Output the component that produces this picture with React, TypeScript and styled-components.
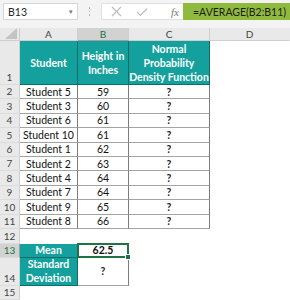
import React from 'react';
import styled, { createGlobalStyle, css } from 'styled-components';

const GlobalStyle = createGlobalStyle`
  html, body {
    margin: 0;
    padding: 0;
    background: #ffffff;
  }
  body {
    font-family: Lato, 'Open Sans', sans-serif;
  }
`;

const TEAL = '#14a19d';
const TEAL_LINE = '#0d6d6a';
const GRID_LINE = '#a3a3a3';
const HEAD_BG = '#e9e9e9';
const HEAD_LINE = '#cfcfcf';
const EXCEL_GREEN = '#217346';

type Row = { name: string; height: string };

const rows: Row[] = [
  { name: 'Student 5', height: '59' },
  { name: 'Student 3', height: '60' },
  { name: 'Student 6', height: '61' },
  { name: 'Student 10', height: '61' },
  { name: 'Student 1', height: '62' },
  { name: 'Student 2', height: '63' },
  { name: 'Student 4', height: '64' },
  { name: 'Student 7', height: '64' },
  { name: 'Student 9', height: '65' },
  { name: 'Student 8', height: '66' },
];

export default function App() {
  return (
    <>
      <GlobalStyle />
      <Window>
        <FormulaBar>
          <NameBox>
            <span>B13</span>
            <Caret>▾</Caret>
          </NameBox>
          <Dots>
            <i />
            <i />
            <i />
          </Dots>
          <ActionBox>
            <ActionIcon>
              <svg width="11" height="11" viewBox="0 0 11 11">
                <path d="M1 1 L10 10 M10 1 L1 10" stroke="#bdbdbd" strokeWidth="1.2" fill="none" />
              </svg>
            </ActionIcon>
            <ActionIcon>
              <svg width="12" height="10" viewBox="0 0 12 10">
                <path d="M1 5 L4.5 8.5 L11 1.5" stroke="#bdbdbd" strokeWidth="1.2" fill="none" />
              </svg>
            </ActionIcon>
            <Fx>fx</Fx>
          </ActionBox>
          <FormulaInput>=AVERAGE(B2:B11)</FormulaInput>
        </FormulaBar>

        <Sheet>
          <Corner>
            <svg width="12" height="11" viewBox="0 0 12 11">
              <path d="M12 0 L12 11 L0 11 Z" fill="#c3c3c3" />
            </svg>
          </Corner>
          <ColHead>A</ColHead>
          <ColHead $active>B</ColHead>
          <ColHead>C</ColHead>
          <ColHead $last>D</ColHead>

          <RowHead>1</RowHead>
          <HeadCell>Student</HeadCell>
          <HeadCell>
            Height in
            <br />
            Inches
          </HeadCell>
          <HeadCell>
            Normal
            <br />
            Probability
            <br />
            Density Function
          </HeadCell>
          <Blank />

          {rows.map((r, i) => (
            <React.Fragment key={r.name}>
              <RowHead>{i + 2}</RowHead>
              <DataCell>{r.name}</DataCell>
              <DataCell>{r.height}</DataCell>
              <DataCell $bold>?</DataCell>
              <Blank />
            </React.Fragment>
          ))}

          <RowHead>12</RowHead>
          <Blank />
          <Blank />
          <Blank />
          <Blank />

          <RowHead $active>13</RowHead>
          <HeadCell>Mean</HeadCell>
          <SelectedCell>62.5</SelectedCell>
          <Blank />
          <Blank />

          <RowHead>14</RowHead>
          <HeadCell>
            Standard
            <br />
            Deviation
          </HeadCell>
          <DataCell $bold>?</DataCell>
          <Blank />
          <Blank />

          <RowHead>15</RowHead>
          <Blank />
          <Blank />
          <Blank />
          <Blank />
        </Sheet>
      </Window>
    </>
  );
}

const Window = styled.div`
  width: 290px;
  height: 300px;
  overflow: hidden;
  background: #f3f3f3;
  display: flex;
  flex-direction: column;
`;

const FormulaBar = styled.div`
  height: 28px;
  display: flex;
  align-items: flex-start;
  padding: 3px 0 0 3px;
  box-sizing: border-box;
`;

const NameBox = styled.div`
  width: 75px;
  height: 17px;
  box-sizing: border-box;
  background: #ffffff;
  border: 1px solid #d6d6d6;
  display: flex;
  align-items: center;
  justify-content: space-between;
  padding: 0 4px 0 4px;
  font-size: 10.5px;
  color: #262626;
`;

const Caret = styled.span`
  font-size: 7px;
  color: #777;
`;

const Dots = styled.div`
  width: 23px;
  height: 17px;
  display: flex;
  flex-direction: column;
  align-items: center;
  justify-content: center;
  gap: 2px;

  i {
    width: 1.5px;
    height: 1.5px;
    background: #b8b8b8;
    display: block;
  }
`;

const ActionBox = styled.div`
  width: 82px;
  height: 17px;
  box-sizing: border-box;
  background: #ffffff;
  border: 1px solid #e0e0e0;
  border-right: none;
  display: flex;
  align-items: center;
  padding-left: 9px;
  gap: 14px;
`;

const ActionIcon = styled.span`
  display: flex;
  align-items: center;
`;

const Fx = styled.span`
  font-family: 'Liberation Serif', serif;
  font-style: italic;
  font-size: 11px;
  color: #777;
  margin-left: 9px;
`;

const FormulaInput = styled.div`
  flex: 1;
  height: 17px;
  background: #8fba3d;
  display: flex;
  align-items: center;
  padding-left: 10px;
  font-size: 10.5px;
  color: #1c1c1c;
`;

const Sheet = styled.div`
  display: grid;
  grid-template-columns: 20px 58px 51px 81px 80px;
  grid-template-rows: 13px 44px repeat(10, 14.4px) 15px 14px 28px 14px;
  background: #ffffff;
  font-size: 10.5px;
  color: #111;
`;

const headBase = css`
  background: ${HEAD_BG};
  color: #444;
  box-sizing: border-box;
  display: flex;
  justify-content: center;
`;

const Corner = styled.div`
  ${headBase};
  align-items: flex-end;
  justify-content: flex-end;
  padding: 0 2px 1px 0;
  border-right: 1px solid ${HEAD_LINE};
  border-bottom: 1px solid ${HEAD_LINE};
`;

const ColHead = styled.div<{ $active?: boolean; $last?: boolean }>`
  ${headBase};
  align-items: center;
  font-size: 10px;
  border-right: 1px solid ${(p) => (p.$last ? 'transparent' : HEAD_LINE)};
  border-bottom: 1px solid ${HEAD_LINE};
  ${(p) =>
    p.$active &&
    css`
      background: #d2d2d2;
      color: ${EXCEL_GREEN};
      border-bottom: 1px solid #9f9f9f;
    `}
`;

const RowHead = styled.div<{ $active?: boolean }>`
  ${headBase};
  align-items: flex-end;
  font-size: 10px;
  line-height: 13px;
  border-right: 1px solid ${HEAD_LINE};
  border-bottom: 1px solid #dcdcdc;
  ${(p) =>
    p.$active &&
    css`
      background: #d2d2d2;
      color: ${EXCEL_GREEN};
      border-right: 1px solid #9f9f9f;
    `}
`;

const HeadCell = styled.div`
  background: ${TEAL};
  color: #ffffff;
  font-weight: 700;
  box-sizing: border-box;
  border-right: 1px solid ${TEAL_LINE};
  border-bottom: 1px solid ${TEAL_LINE};
  display: flex;
  align-items: center;
  justify-content: center;
  text-align: center;
  line-height: 14px;
  font-size: 10.5px;
`;

const DataCell = styled.div<{ $bold?: boolean }>`
  background: #ffffff;
  box-sizing: border-box;
  border-right: 1px solid #7d7d7d;
  border-bottom: 1px solid ${GRID_LINE};
  display: flex;
  align-items: center;
  justify-content: center;
  font-weight: ${(p) => (p.$bold ? 700 : 400)};
  color: ${(p) => (p.$bold ? '#1e2430' : '#111')};
`;

const SelectedCell = styled.div`
  position: relative;
  background: #ffffff;
  box-sizing: border-box;
  border: 2px solid ${EXCEL_GREEN};
  margin: -1px 0 0 -1px;
  display: flex;
  align-items: center;
  justify-content: center;
  font-weight: 700;
  color: #111;

  &::after {
    content: '';
    position: absolute;
    right: -4px;
    bottom: -4px;
    width: 4px;
    height: 4px;
    background: ${EXCEL_GREEN};
    border: 1px solid #ffffff;
  }
`;

const Blank = styled.div`
  background: #ffffff;
`;
